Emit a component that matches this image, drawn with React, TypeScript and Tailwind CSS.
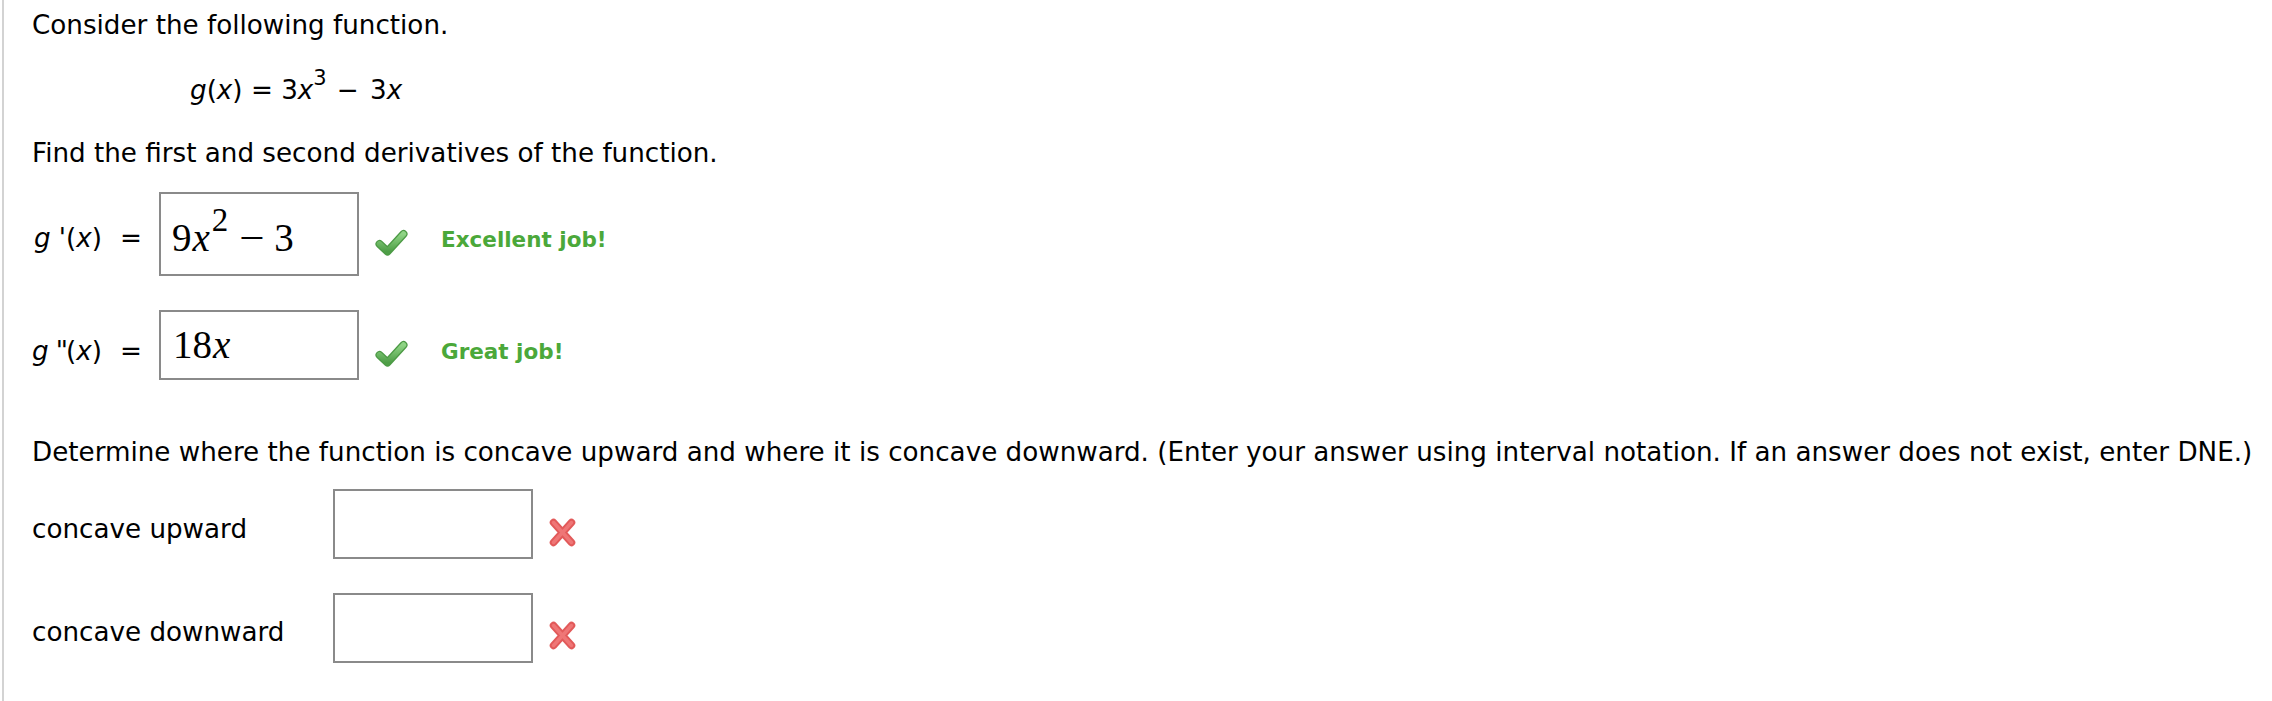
function Check({ className = '' }: { className?: string }) {
    return (
        <svg className={className} width="33" height="27" viewBox="0 0 33 27">
            <defs>
                <linearGradient id="chk" x1="0" y1="0" x2="0" y2="1">
                    <stop offset="0" stopColor="#8fd485" />
                    <stop offset="1" stopColor="#4e9e47" />
                </linearGradient>
            </defs>
            <polyline points="4.5,15 12.5,22.5 28.5,5" fill="none" stroke="#4c9a45" strokeWidth="8" strokeLinecap="round" strokeLinejoin="round" />
            <polyline points="4.5,15 12.5,22.5 28.5,5" fill="none" stroke="url(#chk)" strokeWidth="5.5" strokeLinecap="round" strokeLinejoin="round" />
        </svg>
    );
}

function Cross({ className = '' }: { className?: string }) {
    return (
        <svg className={className} width="27" height="29" viewBox="0 0 27 29">
            <path d="M4.5 4.5 L22.5 24.5 M22.5 4.5 L4.5 24.5" stroke="#e25a5a" strokeWidth="7.5" strokeLinecap="round" />
            <path d="M4.5 4.5 L22.5 24.5 M22.5 4.5 L4.5 24.5" stroke="#ef7676" strokeWidth="3.5" strokeLinecap="round" />
        </svg>
    );
}

const math = "font-['Liberation_Serif',serif] text-[39px] leading-[39px] whitespace-nowrap";

export default function App() {
    return (
        <div className="min-h-[701px] bg-white text-black font-['DejaVu_Sans',sans-serif] text-[26.2px] leading-[30px]">
            <div className="ml-[2px] min-h-[701px] border-l-2 border-[#d3d3d3] pl-[28px] pt-[10px]">
                <p>Consider the following function.</p>
                <p className="mt-[35px] pl-[158px] whitespace-nowrap">
                    <i>g</i>(<i>x</i>) = 3<i>x</i>
                    <sup className="-top-[14px] text-[21px]">3</sup>
                    <span className="ml-[10px] mr-[3px]">−</span> 3<i>x</i>
                </p>
                <p className="mt-[33px]">Find the first and second derivatives of the function.</p>

                {/* first derivative */}
                <div className="mt-[24px] flex items-start">
                    <span className="mt-[31px] flex w-[70px] justify-end whitespace-nowrap">
                        <span>
                            <i>g</i> '(<i>x</i>)
                        </span>
                    </span>
                    <span className="ml-[18px] mt-[31px] w-[21px]">=</span>
                    <div className={`ml-[18px] h-[84px] w-[200px] border-2 border-[#8a8a8a] pl-[11px] pt-[24px] ${math}`}>
                        9<i className="ml-[1px] mr-[2px]">x</i>
                        <sup className="-top-[20px] text-[33px]">2</sup>
                        <span className="ml-[13px] mr-[11px] inline-block scale-x-[1.15]">−</span>3
                    </div>
                    <Check className="ml-[16px] mt-[37px]" />
                    <span className="ml-[33px] mt-[33px] text-[21.5px] font-bold text-[#4ba83a]">Excellent job!</span>
                </div>

                {/* second derivative */}
                <div className="mt-[34px] flex items-start">
                    <span className="mt-[26px] flex w-[70px] justify-end whitespace-nowrap">
                        <span>
                            <i>g</i>
                            <span className="ml-[7px] tracking-[-2px]">''</span>(<i>x</i>)
                        </span>
                    </span>
                    <span className="ml-[18px] mt-[26px] w-[21px]">=</span>
                    <div className={`ml-[18px] h-[70px] w-[200px] border-2 border-[#8a8a8a] pl-[12px] pt-[13px] ${math}`}>
                        18<i className="ml-[1px]">x</i>
                    </div>
                    <Check className="ml-[16px] mt-[30px]" />
                    <span className="ml-[33px] mt-[27px] text-[21.5px] font-bold text-[#4ba83a]">Great job!</span>
                </div>

                <p className="mt-[57px] whitespace-nowrap">
                    Determine where the function is concave upward and where it is concave downward. (Enter your answer using
                    interval notation. If an answer does not exist, enter DNE.)
                </p>

                <div className="mt-[22px] flex items-start">
                    <span className="mt-[25px] w-[301px] whitespace-nowrap">concave upward</span>
                    <div className="h-[70px] w-[200px] border-2 border-[#8a8a8a]" />
                    <Cross className="ml-[16px] mt-[29px]" />
                </div>

                <div className="mt-[34px] flex items-start">
                    <span className="mt-[24px] w-[301px] whitespace-nowrap">concave downward</span>
                    <div className="h-[70px] w-[200px] border-2 border-[#8a8a8a]" />
                    <Cross className="ml-[16px] mt-[28px]" />
                </div>
            </div>
        </div>
    );
}
